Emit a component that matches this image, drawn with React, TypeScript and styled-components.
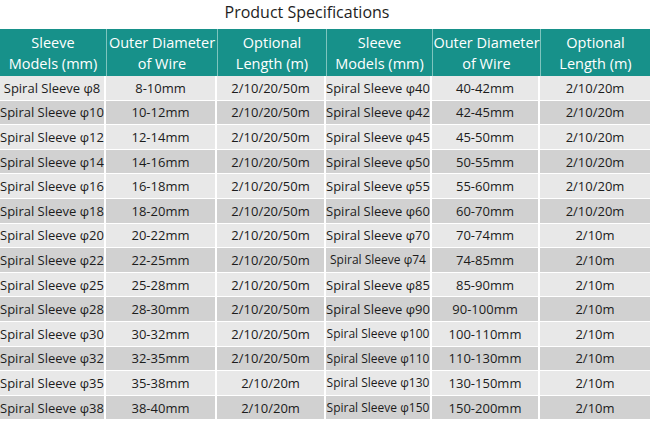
import React from 'react';
import styled, { createGlobalStyle } from 'styled-components';

type Row = [string, string, string];

const left: Row[] = [
  ['Spiral Sleeve φ8', '8-10mm', '2/10/20/50m'],
  ['Spiral Sleeve φ10', '10-12mm', '2/10/20/50m'],
  ['Spiral Sleeve φ12', '12-14mm', '2/10/20/50m'],
  ['Spiral Sleeve φ14', '14-16mm', '2/10/20/50m'],
  ['Spiral Sleeve φ16', '16-18mm', '2/10/20/50m'],
  ['Spiral Sleeve φ18', '18-20mm', '2/10/20/50m'],
  ['Spiral Sleeve φ20', '20-22mm', '2/10/20/50m'],
  ['Spiral Sleeve φ22', '22-25mm', '2/10/20/50m'],
  ['Spiral Sleeve φ25', '25-28mm', '2/10/20/50m'],
  ['Spiral Sleeve φ28', '28-30mm', '2/10/20/50m'],
  ['Spiral Sleeve φ30', '30-32mm', '2/10/20/50m'],
  ['Spiral Sleeve φ32', '32-35mm', '2/10/20/50m'],
  ['Spiral Sleeve φ35', '35-38mm', '2/10/20m'],
  ['Spiral Sleeve φ38', '38-40mm', '2/10/20m'],
];

const right: Row[] = [
  ['Spiral Sleeve φ40', '40-42mm', '2/10/20m'],
  ['Spiral Sleeve φ42', '42-45mm', '2/10/20m'],
  ['Spiral Sleeve φ45', '45-50mm', '2/10/20m'],
  ['Spiral Sleeve φ50', '50-55mm', '2/10/20m'],
  ['Spiral Sleeve φ55', '55-60mm', '2/10/20m'],
  ['Spiral Sleeve φ60', '60-70mm', '2/10/20m'],
  ['Spiral Sleeve φ70', '70-74mm', '2/10m'],
  ['Spiral Sleeve φ74', '74-85mm', '2/10m'],
  ['Spiral Sleeve φ85', '85-90mm', '2/10m'],
  ['Spiral Sleeve φ90', '90-100mm', '2/10m'],
  ['Spiral Sleeve φ100', '100-110mm', '2/10m'],
  ['Spiral Sleeve φ110', '110-130mm', '2/10m'],
  ['Spiral Sleeve φ130', '130-150mm', '2/10m'],
  ['Spiral Sleeve φ150', '150-200mm', '2/10m'],
];

const headers = [
  ['Sleeve', 'Models (mm)'],
  ['Outer Diameter', 'of Wire'],
  ['Optional', 'Length (m)'],
];

// the smaller model names in the right half of the picture
const smallModels = ['φ74', 'φ100', 'φ110', 'φ130', 'φ150'];

const Global = createGlobalStyle`
  body {
    margin: 0;
    background: #ffffff;
    font-family: "Open Sans", "Noto Sans", sans-serif;
    color: #222;
  }
`;

const Page = styled.div`
  width: 650px;
  height: 426px;
  overflow: hidden;
`;

const Title = styled.h1`
  margin: 0;
  height: 29px;
  padding-right: 36px;
  font-size: 16px;
  font-weight: 400;
  line-height: 25px;
  text-align: center;
  color: #1e1e1e;
`;

const Columns = `106px 111px 109px 106px 108px 110px`;

const HeadBand = styled.div`
  display: grid;
  grid-template-columns: ${Columns};
  height: 47px;
  background: #17918a;
`;

const Head = styled.div`
  display: flex;
  flex-direction: column;
  align-items: center;
  justify-content: center;
  padding-top: 1px;
  font-size: 14.5px;
  line-height: 21px;
  color: #fff;
  border-left: 1px solid #7fc4be;
  white-space: nowrap;
  &:first-child {
    border-left: none;
  }
`;

const Grid = styled.div`
  display: grid;
  grid-template-columns: ${Columns};
  grid-auto-rows: 24.6px;
`;

const Cell = styled.div<{ $dark: boolean; $small?: boolean }>`
  background: ${p => (p.$dark ? '#d1d1d1' : '#e8e8e8')};
  border-right: 2px solid #fff;
  border-bottom: 1px solid #fff;
  box-sizing: border-box;
  display: flex;
  align-items: center;
  justify-content: center;
  font-size: ${p => (p.$small ? '12px' : '13px')};
  white-space: nowrap;
  color: #1c1c1c;
  &:nth-child(6n) {
    border-right: none;
  }
`;

const App: React.FC = () => {
  return (
    <Page>
      <Global />
      <Title>Product Specifications</Title>
      <HeadBand>
        {[...headers, ...headers].map((h, i) => (
          <Head key={i}>
            <span>{h[0]}</span>
            <span>{h[1]}</span>
          </Head>
        ))}
      </HeadBand>
      <Grid>
        {left.map((row, i) => {
          const dark = i % 2 === 1;
          const r = right[i];
          const small = smallModels.some(s => r[0].endsWith(s));
          return (
            <React.Fragment key={i}>
              <Cell $dark={dark}>{row[0]}</Cell>
              <Cell $dark={dark}>{row[1]}</Cell>
              <Cell $dark={dark}>{row[2]}</Cell>
              <Cell $dark={dark} $small={small}>{r[0]}</Cell>
              <Cell $dark={dark}>{r[1]}</Cell>
              <Cell $dark={dark}>{r[2]}</Cell>
            </React.Fragment>
          );
        })}
      </Grid>
    </Page>
  );
};

export default App;
